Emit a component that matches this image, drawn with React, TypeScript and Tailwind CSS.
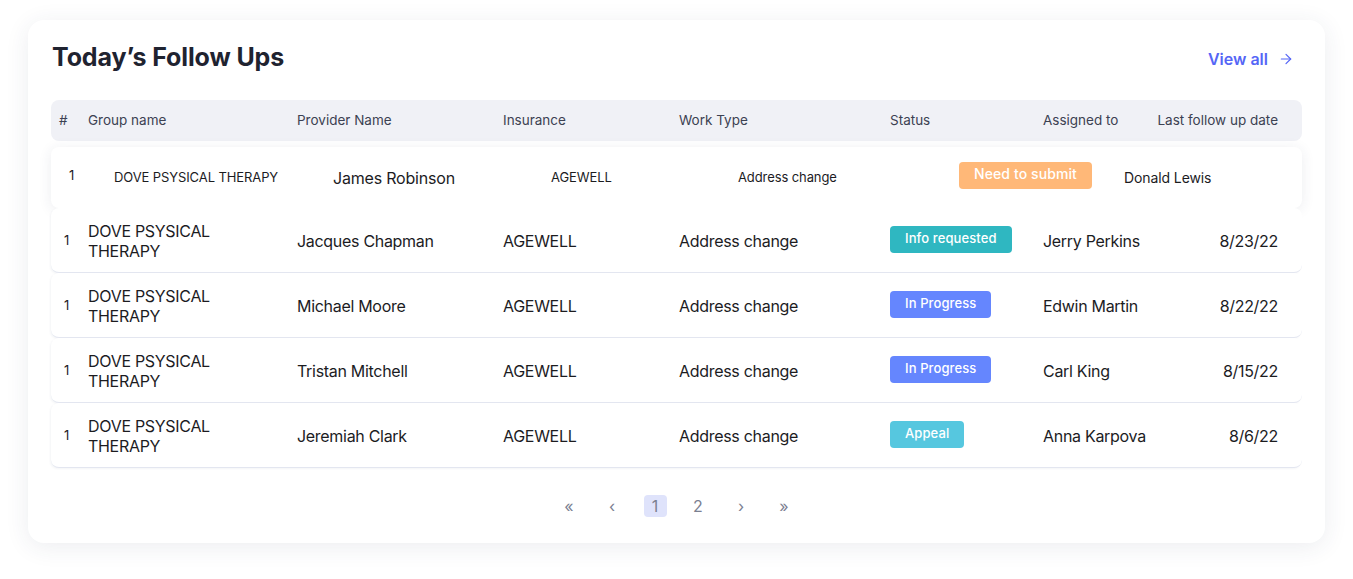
import { ArrowRight } from 'lucide-react';

interface FollowUp {
  group: string;
  provider: string;
  insurance: string;
  workType: string;
  status: string;
  assigned: string;
  date: string;
}

const STATUS_STYLES: Record<string, string> = {
  'Need to submit': 'bg-[#ffb878]',
  'Info requested': 'bg-[#2fb7c1]',
  'In Progress': 'bg-[#6586fe]',
  Appeal: 'bg-[#56c7df]',
};

const ROWS: FollowUp[] = [
  { group: 'DOVE PSYSICAL THERAPY', provider: 'Jacques Chapman', insurance: 'AGEWELL', workType: 'Address change', status: 'Info requested', assigned: 'Jerry Perkins', date: '8/23/22' },
  { group: 'DOVE PSYSICAL THERAPY', provider: 'Michael Moore', insurance: 'AGEWELL', workType: 'Address change', status: 'In Progress', assigned: 'Edwin Martin', date: '8/22/22' },
  { group: 'DOVE PSYSICAL THERAPY', provider: 'Tristan Mitchell', insurance: 'AGEWELL', workType: 'Address change', status: 'In Progress', assigned: 'Carl King', date: '8/15/22' },
  { group: 'DOVE PSYSICAL THERAPY', provider: 'Jeremiah Clark', insurance: 'AGEWELL', workType: 'Address change', status: 'Appeal', assigned: 'Anna Karpova', date: '8/6/22' },
];

const COLS = 'grid grid-cols-[37px_209px_206px_176px_211px_153px_114px_1fr] items-center';

const StatusBadge = ({ status }: { status: string }) => (
  <span
    className={`inline-block rounded-[4px] px-[15px] pt-[3px] pb-[6px] text-[13px] leading-[18px] font-medium tracking-[0.1px] text-white ${STATUS_STYLES[status]}`}
  >
    {status}
  </span>
);

const PageButton = ({ children, active }: { children: React.ReactNode; active?: boolean }) => (
  <button
    className={`flex h-[22px] w-[23px] items-center justify-center rounded-[4px] ${
      active ? 'bg-[#dfe3fb]' : ''
    }`}
  >
    {children}
  </button>
);

const App = () => {
  return (
    <div className="min-h-[579px] bg-white pt-[20px] pl-[28px]" style={{ fontFamily: 'Inter, "Open Sans", sans-serif' }}>
      <div className="w-[1297px] rounded-[16px] bg-white px-[23px] pt-[21px] pb-[26px] shadow-[0_4px_24px_rgba(40,50,90,0.09)]">
        {/* Title */}
        <div className="flex items-center justify-between pl-[1px]">
          <h2 className="text-[25px] leading-[32px] font-bold tracking-[-0.1px] text-[#1f2330]">Today’s Follow Ups</h2>
          <a className="mt-[4px] mr-[8px] flex items-center gap-[10px] text-[16px] font-semibold text-[#5566f6]">
            View all
            <ArrowRight className="h-[16px] w-[16px]" strokeWidth={1.8} />
          </a>
        </div>

        {/* Header */}
        <div className={`${COLS} mt-[27px] h-[41px] rounded-[8px] bg-[#f0f1f6] text-[13.5px] text-[#3c4152]`}>
          <div className="pl-[8px]">#</div>
          <div>Group name</div>
          <div>Provider Name</div>
          <div>Insurance</div>
          <div>Work Type</div>
          <div>Status</div>
          <div>Assigned to</div>
          <div className="pr-[24px] text-right">Last follow up date</div>
        </div>

        {/* Dragged row */}
        <div className="mt-[6px] grid h-[61px] grid-cols-[63px_219px_218px_187px_221px_165px_1fr] items-center rounded-[8px] bg-white text-[13px] tracking-[-0.1px] text-[#1c1c1f] shadow-[0_2px_14px_rgba(40,50,90,0.09)]">
          <div className="-mt-[4px] pl-[18px]">1</div>
          <div>DOVE PSYSICAL THERAPY</div>
          <div className="text-[16px] tracking-[-0.2px]">James Robinson</div>
          <div>AGEWELL</div>
          <div>Address change</div>
          <div className="-mt-[4px]">
            <span className="inline-block rounded-[4px] bg-[#ffb878] px-[15px] pt-[3px] pb-[6px] text-[14px] leading-[18px] font-medium tracking-[0.1px] text-white">
              Need to submit
            </span>
          </div>
          <div className="text-[14px]">Donald Lewis</div>
        </div>

        {/* Rows */}
        {ROWS.map((row, i) => (
          <div
            key={i}
            className={`${COLS} h-[65px] rounded-[8px] border-b border-[#e3e6f0] bg-white pt-[1px] text-[16px] tracking-[-0.3px] text-[#1c1c1f] shadow-[-1px_1px_2px_rgba(40,50,90,0.05)]`}
          >
            <div className="pl-[13px] text-[13px]">1</div>
            <div className="leading-[20px]">
              DOVE PSYSICAL
              <br />
              THERAPY
            </div>
            <div>{row.provider}</div>
            <div>{row.insurance}</div>
            <div>{row.workType}</div>
            <div className="-mt-[3px]">
              <StatusBadge status={row.status} />
            </div>
            <div>{row.assigned}</div>
            <div className="pr-[24px] text-right">{row.date}</div>
          </div>
        ))}

        {/* Pagination */}
        <div className="mt-[27px] flex items-center justify-center gap-[20px] text-[16px] text-[#7b8091]">
          <PageButton>«</PageButton>
          <PageButton>‹</PageButton>
          <PageButton active>1</PageButton>
          <PageButton>2</PageButton>
          <PageButton>›</PageButton>
          <PageButton>»</PageButton>
        </div>
      </div>
    </div>
  );
};

export default App;
